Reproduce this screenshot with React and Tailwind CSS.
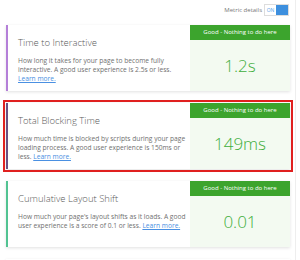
import * as React from "react";

const metrics = [
  {
    title: "Time to Interactive",
    desc: "How long it takes for your page to become fully interactive. A good user experience is 2.5s or less.",
    value: "1.2s",
    bar: "bg-[#b47fd8]",
  },
  {
    title: "Total Blocking Time",
    desc: "How much time is blocked by scripts during your page loading process. A good user experience is 150ms or less.",
    value: "149ms",
    bar: "bg-[#6a4f82]",
    selected: true,
  },
  {
    title: "Cumulative Layout Shift",
    desc: "How much your page's layout shifts as it loads. A good user experience is a score of 0.1 or less.",
    value: "0.01",
    bar: "bg-[#52c392]",
  },
];

function MetricCard({ metric }) {
  return (
    <div
      className={`flex h-[66px] shrink-0 bg-white shadow-[0_1px_3px_rgba(0,0,0,0.12)] ${
        metric.selected ? "outline-2 outline-offset-1 outline-[#e0201f]" : ""
      }`}
    >
      <div className={`w-[2px] shrink-0 ${metric.bar}`} />
      <div className="flex-1 min-w-0 pl-[10px] pt-[11px]">
        <div className="text-[9.5px] leading-[14px] text-[#5a5a5a] font-light">{metric.title}</div>
        <p className="mt-[6px] text-[6.65px] leading-[9.1px] text-[#707070]">
          {metric.desc}{" "}
          <a href="#" className="text-[#4a90e2] underline">Learn more.</a>
        </p>
      </div>
      <div className="w-[100px] shrink-0 flex flex-col">
        <div className="h-[15px] bg-[#3ca42d] text-white text-[6px] leading-[15px] text-center">
          Good - Nothing to do here
        </div>
        <div className="flex-1 bg-[#f3faf1] flex items-center justify-center text-[17px] font-light text-[#3fae3c]">
          {metric.value}
        </div>
      </div>
    </div>
  );
}

export default function App() {
  return (
    <div
      className="relative w-[300px] h-[260px] overflow-hidden bg-white"
      style={{ fontFamily: '"Open Sans", "Liberation Sans", sans-serif' }}
    >
      {/* right edge of the container */}
      <div className="absolute top-0 bottom-0 left-[295px] w-px bg-[#eeeeee]" />

      <div className="flex items-center justify-end gap-[2px] pt-[4px] pr-[11px]">
        <span className="text-[6px] text-[#777]">Metric details</span>
        <div className="flex h-[12px] w-[25px] border border-[#ddd] bg-white">
          <span className="flex-1 text-[5px] leading-[10px] text-[#5aa2e6] text-center">ON</span>
          <span className="w-[12px] bg-[#3d8fde]" />
        </div>
      </div>

      <div className="ml-[6px] mt-[9px] w-[284px] flex flex-col gap-[12px]">
        {metrics.map((m) => (
          <MetricCard key={m.title} metric={m} />
        ))}
        <div className="h-[66px] shrink-0 bg-white shadow-[0_1px_3px_rgba(0,0,0,0.12)]" />
      </div>
    </div>
  );
}
